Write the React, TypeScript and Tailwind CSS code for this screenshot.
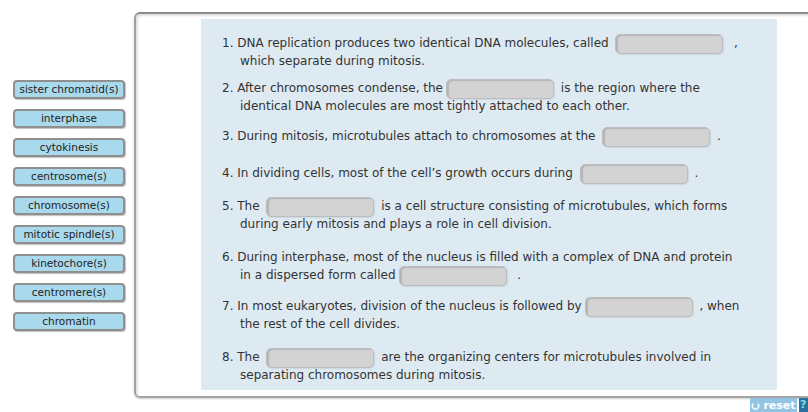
import { Fragment } from "react";

const TERMS = [
  "sister chromatid(s)",
  "interphase",
  "cytokinesis",
  "centrosome(s)",
  "chromosome(s)",
  "mitotic spindle(s)",
  "kinetochore(s)",
  "centromere(s)",
  "chromatin",
];

const FONT = "font-['DejaVu_Sans','Verdana',sans-serif]";

function Blank() {
  return (
    <span className="mx-[3px] -my-[2px] inline-block h-[20px] w-[108px] rounded-[5px] border border-[#bdbdbd] bg-[#d3d3d3] align-middle shadow-[inset_2px_1px_1px_rgba(0,0,0,0.14),1px_1px_1px_rgba(0,0,0,0.08)]" />
  );
}

type Piece = string | null;

// each question: lines of text, null marks a drop target
const QUESTIONS: { mt: string; lines: Piece[][] }[] = [
  {
    mt: "mt-0",
    lines: [
      ["1. DNA replication produces two identical DNA molecules, called ", null, "  ,"],
      ["which separate during mitosis."],
    ],
  },
  {
    mt: "mt-[9px]",
    lines: [
      ["2. After chromosomes condense, the", null, " is the region where the"],
      ["identical DNA molecules are most tightly attached to each other."],
    ],
  },
  {
    mt: "mt-[12px]",
    lines: [["3. During mitosis, microtubules attach to chromosomes at the ", null, " ."]],
  },
  {
    mt: "mt-[19px]",
    lines: [["4. In dividing cells, most of the cell\u2019s growth occurs during ", null, " ."]],
  },
  {
    mt: "mt-[15px]",
    lines: [
      ["5. The ", null, " is a cell structure consisting of microtubules, which forms"],
      ["during early mitosis and plays a role in cell division."],
    ],
  },
  {
    mt: "mt-[15px]",
    lines: [
      ["6. During interphase, most of the nucleus is filled with a complex of DNA and protein"],
      ["in a dispersed form called", null, "  ."],
    ],
  },
  {
    mt: "mt-[13px]",
    lines: [
      ["7. In most eukaryotes, division of the nucleus is followed by", null, " , when"],
      ["the rest of the cell divides."],
    ],
  },
  {
    mt: "mt-[15px]",
    lines: [
      ["8. The ", null, " are the organizing centers for microtubules involved in"],
      ["separating chromosomes during mitosis."],
    ],
  },
];

export default function App() {
  return (
    <div className={`flex h-[412px] w-[808px] flex-col overflow-hidden bg-white ${FONT}`}>
      <div className="flex">
        {/* word bank */}
        <div className="flex w-[134px] shrink-0 flex-col gap-[10px] pl-[13px] pt-[80px]">
          {TERMS.map((t) => (
            <div
              key={t}
              className="flex h-[19px] w-[112px] items-center justify-center rounded-[4px] border-2 border-[#8f8f8f] bg-[#a9d9ec] text-[10.5px] text-[#222] shadow-[1px_1px_1px_rgba(0,0,0,0.25)]"
            >
              {t}
            </div>
          ))}
        </div>

        {/* question panel */}
        <div className="mt-[12px] h-[386px] flex-1 rounded-l-[6px] border-y-2 border-l-2 border-t-[#8a8a8a] border-b-[#a5a5a5] border-l-[#a0a0a0] shadow-[inset_2px_2px_2px_rgba(0,0,0,0.12),0_1px_2px_rgba(0,0,0,0.2)]">
          <div className="ml-[65px] mt-[5px] h-[371px] w-[576px] bg-[#deeaf2] pl-[21px] pt-[15px] text-[12px] leading-[18px] text-[#333]">
            {QUESTIONS.map((q, i) => (
              <div key={i} className={q.mt}>
                {q.lines.map((line, j) => (
                  <div key={j} className={`whitespace-pre ${j > 0 ? "pl-[18px]" : ""}`}>
                    {line.map((p, k) => (
                      <Fragment key={k}>{p === null ? <Blank /> : p}</Fragment>
                    ))}
                  </div>
                ))}
              </div>
            ))}
          </div>
        </div>
      </div>

      {/* footer buttons */}
      <div className="flex justify-end gap-[2px]">
        <div className="flex h-[16px] w-[47px] items-center justify-center gap-[3px] bg-[#94c4e3] text-[11px] font-bold text-white">
          <svg width="9" height="9" viewBox="0 0 10 10" fill="none" stroke="white" strokeWidth="1.6">
            <path d="M2.5 2 A3.5 3.5 0 1 0 7.5 2" />
          </svg>
          reset
        </div>
        <div className="flex h-[16px] w-[9px] items-start justify-start bg-[#2c6e9e] pl-[1px] text-[11px] font-bold leading-[14px] text-[#7fe0d8]">
          ?
        </div>
      </div>
    </div>
  );
}
